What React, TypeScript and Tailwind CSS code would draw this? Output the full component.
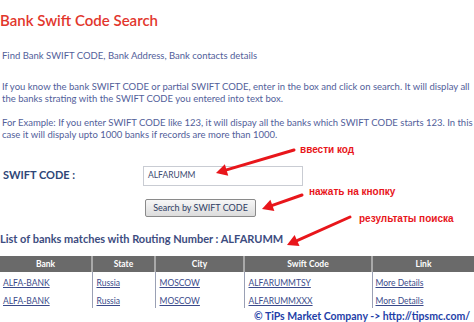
import React from "react"

const rows = [
  { bank: "ALFA-BANK", state: "Russia", city: "MOSCOW", code: "ALFARUMMTSY" },
  { bank: "ALFA-BANK", state: "Russia", city: "MOSCOW", code: "ALFARUMMXXX" },
]

const Arrow = ({ x1, y1, x2, y2 }: { x1: number; y1: number; x2: number; y2: number }) => {
  const a = Math.atan2(y2 - y1, x2 - x1)
  const l = 11
  const w = 6
  const bx = x2 - Math.cos(a) * l
  const by = y2 - Math.sin(a) * l
  const px = Math.sin(a) * w
  const py = -Math.cos(a) * w
  return (
    <g>
      <line x1={x1} y1={y1} x2={bx} y2={by} stroke="#e8161b" strokeWidth={3} strokeLinecap="round" />
      <polygon points={`${x2},${y2} ${bx + px},${by + py} ${bx - px},${by - py}`} fill="#e8161b" />
    </g>
  )
}

export default function App() {
  return (
    <div className="relative w-[474px] h-[322px] overflow-hidden bg-white font-['Lato',sans-serif] text-[#52609a]">
      <h1 className="pt-[8px] text-[15px] leading-[24px] font-semibold text-[#e2362c]">Bank Swift Code Search</h1>

      <p className="mt-[18px] pl-[2px] text-[9.5px] leading-[12.5px]">
        Find Bank SWIFT CODE, Bank Address, Bank contacts details
      </p>

      <p className="mt-[18px] pl-[2px] text-[9.5px] leading-[12.5px] whitespace-nowrap">
        If you know the bank SWIFT CODE or partial SWIFT CODE, enter in the box and click on search. It will display all
        <br />
        the banks strating with the SWIFT CODE you entered into text box.
      </p>

      <p className="mt-[11px] pl-[2px] text-[9.5px] leading-[12.5px] whitespace-nowrap">
        For Example: If you enter SWIFT CODE like 123, it will dispay all the banks which SWIFT CODE starts 123. In this
        <br />
        case it will dispaly upto 1000 banks if records are more than 1000.
      </p>

      <div className="mt-[24px] flex items-center">
        <div className="w-[143px] pl-[3px] text-[11px] font-bold text-[#2e4677]">SWIFT CODE :</div>
        <div className="w-[160px] h-[20px] border border-[#c9ccd3] flex items-center pl-[4px] text-[8.5px] text-[#3c4a70]">
          ALFARUMM
        </div>
      </div>

      <div className="mt-[13px] pl-[145px] flex">
        <button className="h-[18px] w-[111px] border border-[#8a8a8a] rounded-[2px] bg-gradient-to-b from-[#f7f7f7] to-[#dcdcdc] text-[9px] text-[#2e3d64] leading-none whitespace-nowrap">
          Search by SWIFT CODE
        </button>
      </div>

      <div className="mt-[15px] text-[11px] leading-[14px] font-bold text-[#3d4c80] whitespace-nowrap">
        List of banks matches with Routing Number : ALFARUMM
      </div>

      <table className="mt-[10px] w-[474px] border-collapse text-[8.5px] leading-[10px]">
        <thead>
          <tr className="bg-[#6a6a6a] text-white h-[16px]">
            <th className="w-[92px] font-bold border-r-2 border-[#a9a9a9]">Bank</th>
            <th className="w-[63px] font-bold border-r-2 border-[#a9a9a9]">State</th>
            <th className="w-[89px] font-bold border-r-2 border-[#a9a9a9]">City</th>
            <th className="w-[128px] font-bold border-r-2 border-[#a9a9a9]">Swift Code</th>
            <th className="font-bold">Link</th>
          </tr>
        </thead>
        <tbody className="text-[#3a4a8a]">
          {rows.map((r, i) => (
            <tr key={i} className="h-[18px]">
              <td className="pl-[3px] pt-[4px] border-r border-[#9aa0b4]"><span className="underline">{r.bank}</span></td>
              <td className="pl-[4px] pt-[4px] border-r border-[#9aa0b4]"><span className="underline">{r.state}</span></td>
              <td className="pl-[4px] pt-[4px] border-r border-[#9aa0b4]"><span className="underline">{r.city}</span></td>
              <td className="pl-[4px] pt-[4px] border-r border-[#9aa0b4]"><span className="underline">{r.code}</span></td>
              <td className="pl-[3px] pt-[4px]"><span className="underline">More Details</span></td>
            </tr>
          ))}
        </tbody>
      </table>

      <div className="mt-[1px] pl-[254px] text-[10.5px] leading-[14px] font-bold text-[#1f3fa8] whitespace-nowrap">
        © TiPs Market Company -&gt; http://tipsmc.com/
      </div>

      {/* annotations */}
      <svg className="absolute inset-0 pointer-events-none" width={474} height={322}>
        <Arrow x1={294} y1={150} x2={216} y2={173} />
        <Arrow x1={302} y1={195} x2={262} y2={209} />
        <Arrow x1={350} y1={217} x2={287} y2={245} />
      </svg>
      <div className="absolute left-[300px] top-[142px] text-[10px] font-bold text-[#e8161b] font-['Liberation_Sans',sans-serif]">ввести код</div>
      <div className="absolute left-[309px] top-[184px] text-[10px] font-bold text-[#e8161b] font-['Liberation_Sans',sans-serif]">нажать на кнопку</div>
      <div className="absolute left-[359px] top-[211px] text-[10px] font-bold text-[#e8161b] font-['Liberation_Sans',sans-serif]">результаты поиска</div>
    </div>
  )
}
